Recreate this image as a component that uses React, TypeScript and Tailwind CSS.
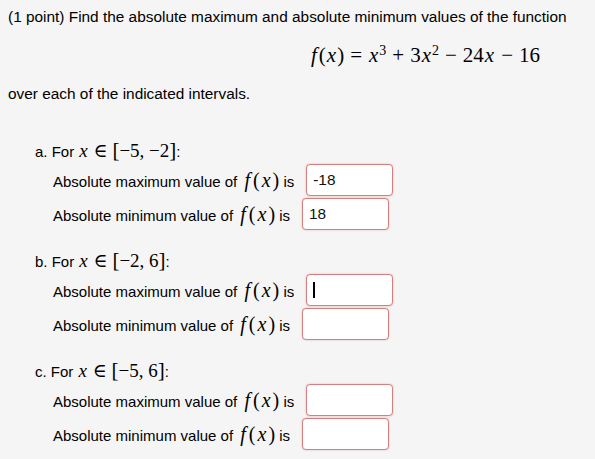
import React from "react";

const M = ({ children }: { children: React.ReactNode }) => (
  <span className="font-['Liberation_Serif','DejaVu_Serif',serif]">{children}</span>
);
const I = ({ children, cls = "" }: { children: React.ReactNode; cls?: string }) => (
  <span className={`italic ${cls}`}>{children}</span>
);

const Fx = () => (
  <M>
    <span className="text-[20px]">
      <I cls="pl-[3px] pr-[3px]">f</I>(<I cls="px-[2px]">x</I>)
    </span>
  </M>
);

const Box = ({ value, caret }: { value?: string; caret?: boolean }) => (
  <div className="ml-[12px] w-[87px] h-[32px] bg-white border border-[#d57f7f] rounded-[4px] shadow-[0_0_2px_rgba(200,80,80,0.4)] flex items-center px-[6px] text-[15.4px] text-[#111]">
    {value}
    {caret && <span className="inline-block w-[1.5px] h-[16px] bg-black" />}
  </div>
);

const Row = ({ label, value, caret }: { label: string; value?: string; caret?: boolean }) => (
  <div className="flex items-center h-[34px] pl-[53px]">
    <span>
      Absolute {label} value of <Fx /> is
    </span>
    <Box value={value} caret={caret} />
  </div>
);

const Section = ({
  letter,
  a,
  b,
  max,
  min,
  caret,
}: {
  letter: string;
  a: string;
  b: string;
  max?: string;
  min?: string;
  caret?: boolean;
}) => (
  <div className="mt-[18px] first:mt-0">
    <div className="h-[24px] pl-[35px] flex items-center">
      <span>
        {letter}. For{" "}
        <M>
          <span className="text-[19px]">
            <I cls="px-[1px]">x</I> ∈ <span className="text-[21px]">[</span>
            {a}, {b}
            <span className="text-[21px]">]</span>
          </span>
        </M>
        :
      </span>
    </div>
    <Row label="maximum" value={max} caret={caret} />
    <Row label="minimum" value={min} />
  </div>
);

export default function App() {
  return (
    <div className="w-[595px] h-[459px] bg-[#f5f5f5] text-black font-['Liberation_Sans',Arial,sans-serif] text-[15px] overflow-hidden">
      <div className="pt-[8px] pl-[8px] leading-[17px] text-[15.4px]">
        (1 point) Find the absolute maximum and absolute minimum values of the function
      </div>
      <div className="mt-[16px] pl-[311px] h-[30px] flex items-center">
        <M>
          <span className="text-[21px]">
            <I cls="pr-[2px]">f</I>(<I cls="px-[1px]">x</I>)<span className="mx-[6px]">=</span>
            <I cls="px-[1px]">x</I>
            <sup className="text-[14px]">3</sup>
            <span className="mx-[6px]">+</span>3<I cls="px-[1px]">x</I>
            <sup className="text-[14px]">2</sup>
            <span className="mx-[6px]">−</span>24<I cls="px-[1px]">x</I>
            <span className="mx-[6px]">−</span>16
          </span>
        </M>
      </div>
      <div className="mt-[14px] pl-[8px] leading-[17px] text-[15.4px]">over each of the indicated intervals.</div>
      <div className="mt-[37px]">
        <Section letter="a" a="−5" b="−2" max="-18" min="18" />
        <Section letter="b" a="−2" b="6" caret />
        <Section letter="c" a="−5" b="6" />
      </div>
    </div>
  );
}
